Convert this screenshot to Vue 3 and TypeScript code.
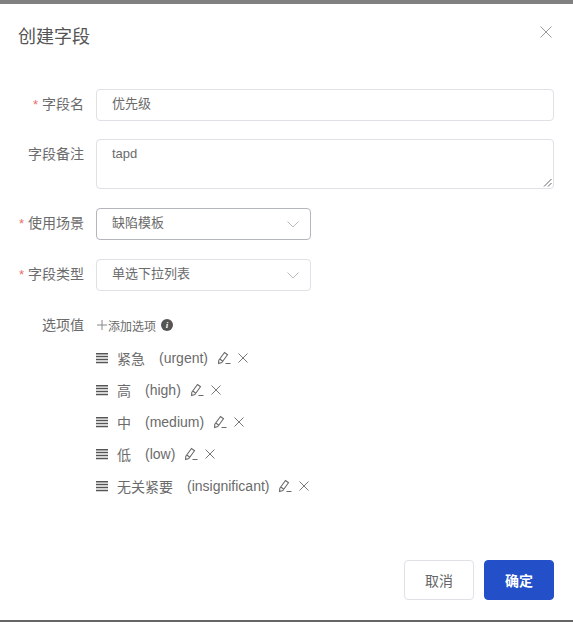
<script setup lang="ts">
const options = [
  { name: '紧急', value: '(urgent)' },
  { name: '高', value: '(high)' },
  { name: '中', value: '(medium)' },
  { name: '低', value: '(low)' },
  { name: '无关紧要', value: '(insignificant)' },
]
</script>

<template>
  <div class="dialog">
    <header class="head">
      <h1 class="title">创建字段</h1>
      <svg class="close" width="12" height="12" viewBox="0 0 12 12"><path d="M.5.5l11 11M11.500.5l-11 11" stroke="#9a9a9a" fill="none" /></svg>
    </header>
    <form class="form">
      <div class="row first">
        <label class="label"><i class="req">*</i>字段名</label>
        <div class="box input">优先级</div>
      </div>
      <div class="row r2">
        <label class="label">字段备注</label>
        <div class="box area">tapd
          <svg class="grip" width="9" height="9" viewBox="0 0 9 9"><path d="M8.500 1L1 8.500M8.500 5L5 8.500" stroke="#666" fill="none" /></svg>
        </div>
      </div>
      <div class="row r3">
        <label class="label"><i class="req">*</i>使用场景</label>
        <div class="box select active">缺陷模板
          <svg class="chev" width="12" height="7" viewBox="0 0 12 7"><path d="M.5.500L6 6l5.500-5.500" stroke="#bbb" fill="none" /></svg>
        </div>
      </div>
      <div class="row r4">
        <label class="label"><i class="req">*</i>字段类型</label>
        <div class="box select">单选下拉列表
          <svg class="chev" width="12" height="7" viewBox="0 0 12 7"><path d="M.5.500L6 6l5.500-5.500" stroke="#bbb" fill="none" /></svg>
        </div>
      </div>
      <div class="row r5">
        <label class="label">选项值</label>
        <div class="opts">
          <div class="add">
            <svg width="10" height="10" viewBox="0 0 10 10"><path d="M5 0v10M0 5h10" stroke="#888" fill="none" /></svg>
            <span>添加选项</span>
            <span class="info">i</span>
          </div>
          <ul class="list">
            <li v-for="o in options" :key="o.name" class="item">
              <svg class="drag" width="12" height="11" viewBox="0 0 12 11"><path d="M0 .7h12M0 3.600h12M0 6.500h12M0 9.400h12" stroke="#555" stroke-width="1.500" fill="none" /></svg>
              <span class="name">{{ o.name }}</span>
              <span class="val">{{ o.value }}</span>
              <svg class="pen" width="14" height="14" viewBox="0 0 14 14"><path d="M1.800 9.300L7.500 1.500l3 2.200-5.700 7.800-3.200 1zM2.800 8l3 2.200M8.500 12.500h5" stroke="#6a6a6a" stroke-width="1.100" fill="none" /></svg>
              <svg class="del" width="10" height="10" viewBox="0 0 10 10"><path d="M.5.500l9 9M9.500.500l-9 9" stroke="#777" fill="none" /></svg>
            </li>
          </ul>
        </div>
      </div>
    </form>
    <footer class="foot">
      <button type="button" class="btn">取消</button>
      <button type="button" class="btn primary">确定</button>
    </footer>
  </div>
</template>

<style scoped>
.dialog {
  box-sizing: border-box;
  width: 573px;
  height: 622px;
  background: #fff;
  border-top: 4px solid #808080;
  border-bottom: 2px solid #666;
  display: flex;
  flex-direction: column;
  font-family: "Liberation Sans", "Noto Sans CJK SC", sans-serif;
  font-size: 13px;
  color: #6b6b6b;
}
.head {
  height: 85px;
  flex: none;
  display: flex;
  justify-content: space-between;
  align-items: flex-start;
  padding: 21px 21px 0 18px;
  box-sizing: border-box;
}
.title {
  margin: 0;
  font-size: 18px;
  font-weight: 400;
  line-height: 24px;
  color: #555;
}
.close { margin-top: 1px; }
.form { flex: 1; padding-right: 19px; }
.row { display: flex; align-items: flex-start; }
.r2 { margin-top: 18px; }
.r3, .r4 { margin-top: 19px; }
.r5 { margin-top: 19px; }
.label {
  width: 84px;
  flex: none;
  text-align: right;
  font-size: 14px;
  line-height: 30px;
  margin-right: 12px;
  white-space: nowrap;
}
.req {
  font-style: normal;
  color: #e8706a;
  margin-right: 4px;
  font-size: 13px;
}
.box {
  box-sizing: border-box;
  border: 1px solid #dfe1e6;
  border-radius: 4px;
  padding: 0 15px;
  line-height: 28px;
  position: relative;
}
.input { flex: 1; height: 32px; }
.area { flex: 1; height: 50px; line-height: 28px; }
.grip { position: absolute; right: 1px; bottom: 1px; }
.select { width: 215px; height: 32px; }
.select.active { border-color: #b4b6bd; }
.chev { position: absolute; right: 11px; top: 12px; }
.opts { flex: 1; }
.add {
  display: flex;
  align-items: center;
  height: 30px;
  font-size: 12px;
}
.add svg { margin-left: 1px; }
.add span:first-of-type { margin-left: 1px; }
.info {
  margin-left: 5px;
  width: 12px;
  height: 12px;
  border-radius: 50%;
  background: #555;
  color: #fff;
  font: italic 700 9px/12px "Liberation Serif", serif;
  text-align: center;
}
.list { list-style: none; margin: 2px 0 0; padding: 0; }
.item { display: flex; align-items: center; height: 32px; }
.drag { flex: none; }
.name { margin-left: 9px; font-size: 14px; white-space: nowrap; }
.val { margin-left: 14px; font-size: 14px; white-space: nowrap; }
.pen { margin-left: 9px; flex: none; }
.del { margin-left: 7px; flex: none; }
.foot {
  flex: none;
  display: flex;
  justify-content: flex-end;
  gap: 10px;
  padding: 0 19px 20px 0;
}
.btn {
  width: 70px;
  height: 40px;
  box-sizing: border-box;
  background: #fff;
  border: 1px solid #dfe1e6;
  border-radius: 4px;
  font: inherit;
  font-size: 14px;
  color: #666;
  padding: 0;
}
.btn.primary {
  background: #2350c8;
  border-color: #2350c8;
  color: #fff;
  font-weight: 700;
}
</style>
